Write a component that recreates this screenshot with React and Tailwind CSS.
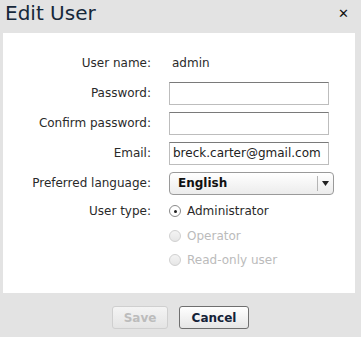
import React from 'react';

const font = { fontFamily: '"DejaVu Sans", Verdana, sans-serif' };

const Row = ({ label, children, h = 'h-[30px]' }) => (
  <div className={`flex items-center ${h}`}>
    <div className="w-[148px] text-right text-[12px] text-[#2a2a2a]">{label}</div>
    <div className="ml-[18px] flex items-center">{children}</div>
  </div>
);

const TextBox = ({ value = '' }) => (
  <div className="w-[160px] h-[23px] border border-[#bdbdbd] border-t-[#7a7a7a] bg-white flex items-center px-[3px] text-[12px] text-[#222]">
    {value}
  </div>
);

const Radio = ({ checked, disabled, label }) => (
  <div className="flex items-center">
    <span
      className={`w-[12px] h-[12px] rounded-full border flex items-center justify-center ${
        disabled ? 'border-[#d0d0d0] bg-gradient-to-b from-[#f4f4f4] to-[#e6e6e6]' : 'border-[#8a8a8a] bg-white'
      }`}
    >
      {checked && <span className="w-[3px] h-[3px] rounded-full bg-[#222]" />}
    </span>
    <span className={`ml-[6px] text-[12px] ${disabled ? 'text-[#bbbbbb]' : 'text-[#2a2a2a]'}`}>{label}</span>
  </div>
);

export default function App() {
  return (
    <div className="w-[361px] h-[337px] bg-[#e3e3e3] flex flex-col" style={font}>
      {/* title bar */}
      <div className="h-[33px] flex items-start justify-between">
        <div className="ml-[5px] mt-[0px] text-[20px] leading-[26px] text-[#16283a]">Edit User</div>
        <div className="mr-[12px] mt-[6px] text-[13px] font-bold text-[#111] leading-[16px]">✕</div>
      </div>

      {/* body */}
      <div className="ml-[3px] mr-[6px] h-[260px] bg-white pt-[15px]">
        <Row label="User name:">
          <span className="text-[12px] text-[#2a2a2a] ml-[3px]">admin</span>
        </Row>
        <Row label="Password:">
          <TextBox />
        </Row>
        <Row label="Confirm password:">
          <TextBox />
        </Row>
        <Row label="Email:">
          <TextBox value="breck.carter@gmail.com" />
        </Row>
        <Row label="Preferred language:">
          <div className="w-[165px] h-[23px] rounded-[4px] border border-[#9a9a9a] bg-gradient-to-b from-white to-[#ececec] flex items-center">
            <span className="flex-1 pl-[8px] text-[12px] font-bold text-[#111]">English</span>
            <span className="w-px h-[15px] bg-[#b5b5b5]" />
            <span className="w-[15px] flex justify-center">
              <svg width="7" height="5" viewBox="0 0 7 5">
                <path d="M0 0h7L3.5 5z" fill="#222" />
              </svg>
            </span>
          </div>
        </Row>
        <Row label="User type:" h="h-[26px]">
          <Radio checked label="Administrator" />
        </Row>
        <div className="h-[24px] flex items-center pl-[166px]">
          <Radio disabled label="Operator" />
        </div>
        <div className="h-[24px] flex items-center pl-[166px]">
          <Radio disabled label="Read-only user" />
        </div>
      </div>

      {/* footer */}
      <div className="flex-1 flex items-start justify-center pt-[13px] gap-[11px]">
        <button className="w-[56px] h-[23px] rounded-[3px] border border-[#cfcfcf] bg-gradient-to-b from-[#f4f4f4] to-[#e4e4e4] text-[12px] font-bold text-[#bcbcbc]">
          Save
        </button>
        <button className="w-[70px] h-[23px] rounded-[3px] border border-[#6f6f6f] bg-gradient-to-b from-white to-[#e6e6e6] text-[12px] font-bold text-[#142238]">
          Cancel
        </button>
      </div>
    </div>
  );
}
